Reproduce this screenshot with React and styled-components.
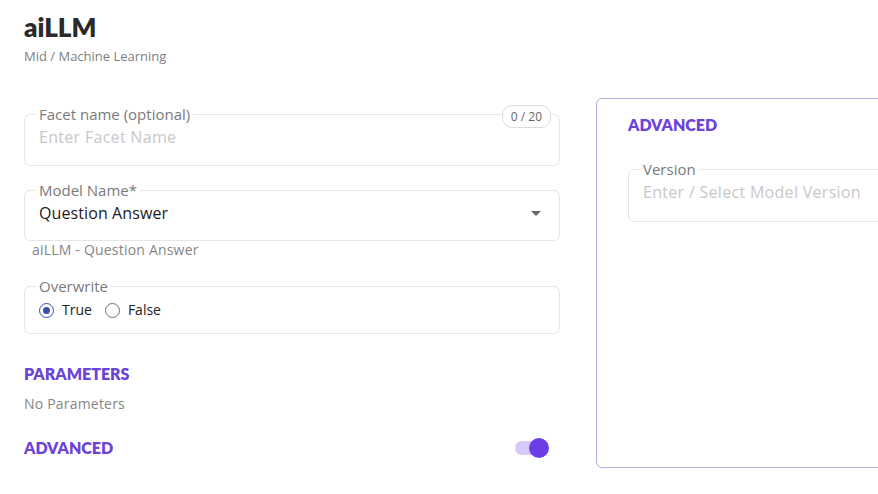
import React, { useState } from 'react';
import styled, { createGlobalStyle } from 'styled-components';

const GlobalStyle = createGlobalStyle`
  html, body {
    margin: 0;
    padding: 0;
    background: #fff;
    overflow: hidden;
  }
  body {
    font-family: 'Open Sans', 'Lato', sans-serif;
    color: #222;
  }
`;

const Page = styled.div`
  padding: 11px 0 0 24px;
  width: 1200px;
`;

const Title = styled.h1`
  margin: 0;
  font-family: 'Lato', sans-serif;
  font-size: 26px;
  line-height: 32px;
  font-weight: 800;
  color: #2a2a2a;
`;

const Crumb = styled.div`
  margin-top: 5px;
  font-size: 13px;
  line-height: 16px;
  color: #808080;
`;

const Body = styled.div`
  display: flex;
  align-items: flex-start;
  gap: 36px;
  margin-top: 34px;
`;

const Column = styled.div`
  width: 536px;
  flex-shrink: 0;
  padding-top: 8px;
  display: flex;
  flex-direction: column;
`;

const Field = styled.fieldset`
  position: relative;
  margin: 0 0 ${p => p.$gap || 0}px;
  padding: 3px 14px ${p => p.$padBottom || 16}px;
  border: 1px solid #e6e6e6;
  border-radius: 6px;
  min-width: 0;
`;

const Legend = styled.legend`
  padding: 0 3px;
  margin-left: -3px;
  font-size: 15px;
  line-height: 17px;
  color: #7a7a7a;
`;

const Counter = styled.span`
  position: absolute;
  right: 8px;
  top: -18px;
  padding: 3px 8px;
  font-size: 12px;
  line-height: 15px;
  color: #666;
  background: #fff;
  border: 1px solid #dcdcdc;
  border-radius: 10px;
`;

const Input = styled.div`
  font-size: 16px;
  line-height: 22px;
  letter-spacing: ${p => (p.$placeholder ? '0.3px' : '0.1px')};
  color: ${p => (p.$placeholder ? '#c8c8c8' : '#1c1c1c')};
`;

const SelectRow = styled.div`
  display: flex;
  align-items: center;
  justify-content: space-between;
`;

const Caret = styled.span`
  width: 0;
  height: 0;
  margin-right: 4px;
  border-left: 5px solid transparent;
  border-right: 5px solid transparent;
  border-top: 5px solid #666;
`;

const Helper = styled.div`
  margin: 1px 0 20px 8px;
  font-size: 14px;
  line-height: 16px;
  letter-spacing: 0.2px;
  color: #858585;
`;

const RadioGroup = styled.div`
  display: flex;
  align-items: center;
  gap: 13px;
  padding-top: 2px;
`;

const RadioLabel = styled.label`
  display: flex;
  align-items: center;
  gap: 8px;
  font-size: 14px;
  line-height: 20px;
  color: #222;
  cursor: pointer;
`;

const RadioDot = styled.span`
  box-sizing: border-box;
  width: 15px;
  height: 15px;
  border-radius: 50%;
  border: 1.5px solid ${p => (p.$on ? '#3b4db3' : '#6e6e6e')};
  display: flex;
  align-items: center;
  justify-content: center;

  &::after {
    content: '';
    width: 7px;
    height: 7px;
    border-radius: 50%;
    background: ${p => (p.$on ? '#3b4db3' : 'transparent')};
  }
`;

const SectionTitle = styled.div`
  font-family: 'Lato', sans-serif;
  font-size: 16px;
  line-height: 20px;
  font-weight: 800;
  color: #6b43d9;
`;

const Muted = styled.div`
  margin-top: 11px;
  font-size: 14px;
  line-height: 18px;
  letter-spacing: 0.2px;
  color: #868686;
`;

const ToggleRow = styled.div`
  display: flex;
  align-items: center;
  justify-content: space-between;
  margin-top: 25px;
  padding-right: 11px;
`;

const Toggle = styled.button`
  position: relative;
  width: 34px;
  height: 20px;
  padding: 0;
  border: none;
  background: none;
  cursor: pointer;

  &::before {
    content: '';
    position: absolute;
    left: 0;
    top: 3px;
    width: 30px;
    height: 14px;
    border-radius: 7px;
    background: ${p => (p.$on ? '#d6c9f7' : '#d0d0d0')};
  }

  &::after {
    content: '';
    position: absolute;
    top: 0;
    left: ${p => (p.$on ? '14px' : '0')};
    width: 20px;
    height: 20px;
    border-radius: 50%;
    background: ${p => (p.$on ? '#6a3de6' : '#f5f5f5')};
  }
`;

const Panel = styled.div`
  width: 536px;
  height: 370px;
  flex-shrink: 0;
  box-sizing: border-box;
  padding: 16px 31px;
  border: 1px solid #b9addf;
  border-radius: 6px;
`;

const PanelField = styled(Field)`
  margin-top: 26px;
`;

export default function App() {
  const [overwrite, setOverwrite] = useState(true);
  const [advanced, setAdvanced] = useState(true);

  return (
    <Page>
      <GlobalStyle />
      <Title>aiLLM</Title>
      <Crumb>Mid / Machine Learning</Crumb>
      <Body>
        <Column>
          <Field $gap={16} $padBottom={17}>
            <Legend>Facet name (optional)</Legend>
            <Counter>0 / 20</Counter>
            <Input $placeholder>Enter Facet Name</Input>
          </Field>

          <Field $padBottom={16}>
            <Legend>Model Name*</Legend>
            <SelectRow>
              <Input>Question Answer</Input>
              <Caret />
            </SelectRow>
          </Field>
          <Helper>aiLLM - Question Answer</Helper>

          <Field $padBottom={13} $gap={30}>
            <Legend>Overwrite</Legend>
            <RadioGroup>
              <RadioLabel onClick={() => setOverwrite(true)}>
                <RadioDot $on={overwrite} />
                True
              </RadioLabel>
              <RadioLabel onClick={() => setOverwrite(false)}>
                <RadioDot $on={!overwrite} />
                False
              </RadioLabel>
            </RadioGroup>
          </Field>

          <SectionTitle>PARAMETERS</SectionTitle>
          <Muted>No Parameters</Muted>

          <ToggleRow>
            <SectionTitle>ADVANCED</SectionTitle>
            <Toggle $on={advanced} onClick={() => setAdvanced(!advanced)} aria-label="Toggle advanced" />
          </ToggleRow>
        </Column>

        <Panel>
          <SectionTitle>ADVANCED</SectionTitle>
          <PanelField $padBottom={18}>
            <Legend>Version</Legend>
            <Input $placeholder>Enter / Select Model Version</Input>
          </PanelField>
        </Panel>
      </Body>
    </Page>
  );
}
